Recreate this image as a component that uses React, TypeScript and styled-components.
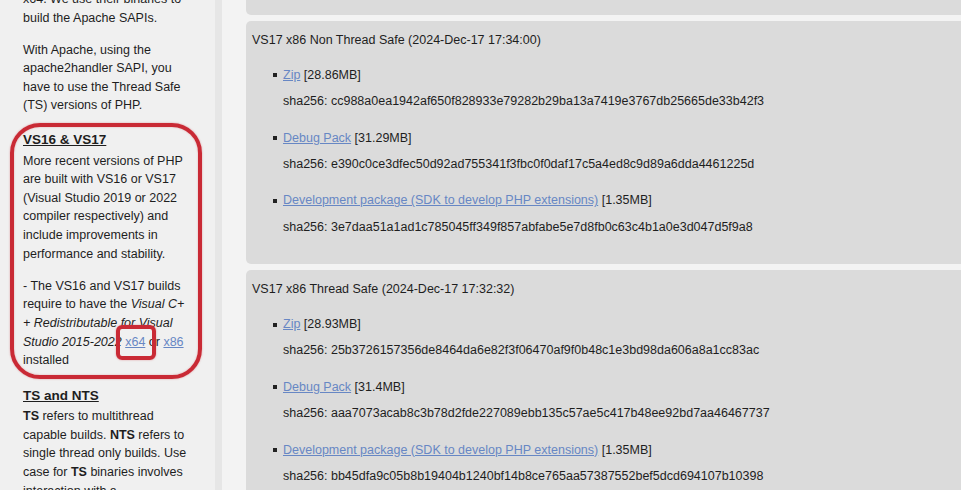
import React from 'react';
import styled, { createGlobalStyle } from 'styled-components';

const Global = createGlobalStyle`
  html, body {
    margin: 0;
    padding: 0;
    background: #f3f3f3;
  }
  body {
    font-family: 'Liberation Sans', Arial, sans-serif;
    font-size: 12.5px;
    line-height: 18.6px;
    color: #1e1e1e;
  }
`;

const Page = styled.div`
  display: flex;
  height: 490px;
  overflow: hidden;
`;

const Sidebar = styled.aside`
  width: 222px;
  flex: none;
  background: #f0f0f0;
  border-right: 7px solid #e6e6e6;
  box-sizing: border-box;
  padding: 0 10px 0 23px;
`;

const SideInner = styled.div`
  margin-top: -10px;
`;

const Para = styled.p`
  margin: 0 0 13.5px;
  white-space: nowrap;
`;

const Heading = styled.h3`
  margin: 0 0 2px;
  font-size: 13.5px;
  font-weight: bold;
  text-decoration: underline;
  line-height: 18.6px;
`;

// red annotation drawn round the VS16 & VS17 section
const Highlight = styled.section`
  margin: -5.5px 3px 8px -13px;
  padding: 4px 0 5px 9px;
  border: 4px solid #c92a35;
  border-radius: 30px;
  box-shadow: 0 0 2px rgba(201, 42, 53, 0.45), inset 0 0 2px rgba(201, 42, 53, 0.35);
  & > p:last-child {
    margin-bottom: 0;
  }
`;

const Link = styled.a`
  color: #6787c4;
  text-decoration: underline;
  cursor: pointer;
`;

const Marked = styled(Link)`
  position: relative;
  &::after {
    content: '';
    position: absolute;
    left: -9px;
    right: -11px;
    top: -10px;
    bottom: -11.5px;
    border: 4px solid #c92a35;
    border-radius: 6px;
    box-shadow: 0 0 2px rgba(201, 42, 53, 0.45);
  }
`;

const Main = styled.main`
  flex: 1;
  min-width: 0;
  padding-left: 24px;
  display: flex;
  flex-direction: column;
  gap: 6px;
`;

const Panel = styled.div<{ $tail?: boolean }>`
  background: #dbdbdb;
  margin-right: -6px;
  border-radius: 5px;
  padding: 10px 0 10px 6px;
  flex: none;
  ${(p) => (p.$tail ? 'height: 15px; padding: 0; border-radius: 0 0 5px 5px;' : '')}
`;

const Title = styled.div`
  margin-bottom: 16.5px;
`;

const List = styled.ul`
  list-style: none;
  margin: 0 0 18px;
  padding-left: 31px;
`;

const Item = styled.li`
  margin-bottom: 18px;
  &:last-child {
    margin-bottom: 0;
  }
`;

const ItemHead = styled.div`
  display: flex;
  align-items: center;
  gap: 6px;
  margin-left: -10px;
`;

const Bullet = styled.span`
  width: 4px;
  height: 4px;
  background: #222;
  flex: none;
`;

const Hash = styled.div`
  margin-top: 7.5px;
`;

type Build = { label: string; size: string; sha: string };

const builds: { title: string; files: Build[] }[] = [
  {
    title: 'VS17 x86 Non Thread Safe (2024-Dec-17 17:34:00)',
    files: [
      { label: 'Zip', size: '28.86MB', sha: 'cc988a0ea1942af650f828933e79282b29ba13a7419e3767db25665de33b42f3' },
      { label: 'Debug Pack', size: '31.29MB', sha: 'e390c0ce3dfec50d92ad755341f3fbc0f0daf17c5a4ed8c9d89a6dda4461225d' },
      {
        label: 'Development package (SDK to develop PHP extensions)',
        size: '1.35MB',
        sha: '3e7daa51a1ad1c785045ff349f857abfabe5e7d8fb0c63c4b1a0e3d047d5f9a8',
      },
    ],
  },
  {
    title: 'VS17 x86 Thread Safe (2024-Dec-17 17:32:32)',
    files: [
      { label: 'Zip', size: '28.93MB', sha: '25b3726157356de8464da6e82f3f06470af9f0b48c1e3bd98da606a8a1cc83ac' },
      { label: 'Debug Pack', size: '31.4MB', sha: 'aaa7073acab8c3b78d2fde227089ebb135c57ae5c417b48ee92bd7aa46467737' },
      {
        label: 'Development package (SDK to develop PHP extensions)',
        size: '1.35MB',
        sha: 'bb45dfa9c05b8b19404b1240bf14b8ce765aa57387552bef5dcd694107b10398',
      },
    ],
  },
];

export default function App() {
  return (
    <>
      <Global />
      <Page>
        <Sidebar>
          <SideInner>
            <Para>
              x64. We use their binaries to
              <br />
              build the Apache SAPIs.
            </Para>
            <Para>
              With Apache, using the
              <br />
              apache2handler SAPI, you
              <br />
              have to use the Thread Safe
              <br />
              (TS) versions of PHP.
            </Para>
            <Highlight>
              <Heading>VS16 &amp; VS17</Heading>
              <Para>
                More recent versions of PHP
                <br />
                are built with VS16 or VS17
                <br />
                (Visual Studio 2019 or 2022
                <br />
                compiler respectively) and
                <br />
                include improvements in
                <br />
                performance and stability.
              </Para>
              <Para>
                - The VS16 and VS17 builds
                <br />
                require to have the <em>Visual C+</em>
                <br />
                <em>+ Redistributable for Visual</em>
                <br />
                <em>Studio 2015-2022</em> <Marked>x64</Marked> or <Link>x86</Link>
                <br />
                installed
              </Para>
            </Highlight>
            <Heading>TS and NTS</Heading>
            <Para>
              <b>TS</b> refers to multithread
              <br />
              capable builds. <b>NTS</b> refers to
              <br />
              single thread only builds. Use
              <br />
              case for <b>TS</b> binaries involves
              <br />
              interaction with a
            </Para>
          </SideInner>
        </Sidebar>
        <Main>
          <Panel $tail />
          {builds.map((b) => (
            <Panel key={b.title}>
              <Title>{b.title}</Title>
              <List>
                {b.files.map((f) => (
                  <Item key={f.sha}>
                    <ItemHead>
                      <Bullet />
                      <span>
                        <Link>{f.label}</Link> [{f.size}]
                      </span>
                    </ItemHead>
                    <Hash>sha256: {f.sha}</Hash>
                  </Item>
                ))}
              </List>
            </Panel>
          ))}
        </Main>
      </Page>
    </>
  );
}
